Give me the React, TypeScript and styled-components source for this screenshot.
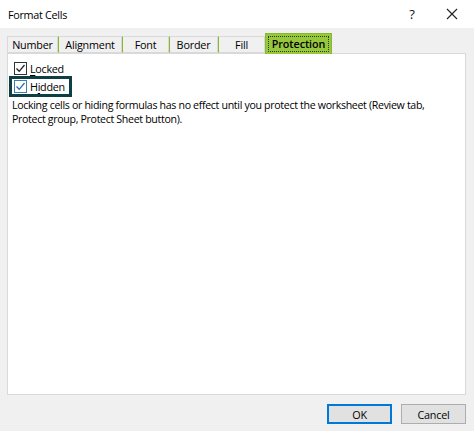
import styled, { createGlobalStyle } from 'styled-components';

const GlobalStyle = createGlobalStyle`
    html, body {
        margin: 0;
        padding: 0;
        background: #ffffff;
    }
    body {
        font-family: "Open Sans", "Noto Sans", "Liberation Sans", sans-serif;
        font-size: 10.5px;
        letter-spacing: -0.3px;
        color: #000000;
    }
`;

const Dialog = styled.div`
    width: 474px;
    height: 431px;
    display: flex;
    flex-direction: column;
    background: #f0f0f0;
    overflow: hidden;
`;

const TitleBar = styled.div`
    height: 28px;
    flex: 0 0 28px;
    background: #ffffff;
    display: flex;
    align-items: center;
    padding-left: 8px;
`;

const Title = styled.div`
    flex: 1;
    font-size: 10.8px;
`;

const TitleButton = styled.div<{ $width: number }>`
    width: ${p => p.$width}px;
    height: 28px;
    display: flex;
    align-items: center;
    justify-content: center;
    font-size: 13px;
    color: #111;
`;

const Body = styled.div`
    flex: 1;
    display: flex;
    flex-direction: column;
    padding: 0 8px 0 7px;
`;

const TabStrip = styled.div`
    height: 25px;
    flex: 0 0 25px;
    display: flex;
    align-items: flex-end;
    position: relative;
    z-index: 1;
`;

const Tab = styled.div<{ $width: number; $active?: boolean }>`
    width: ${p => p.$width}px;
    box-sizing: border-box;
    height: ${p => (p.$active ? 21 : 17)}px;
    margin-bottom: ${p => (p.$active ? -1 : 0)}px;
    display: flex;
    align-items: center;
    justify-content: center;
    font-size: 10.8px;
    letter-spacing: -0.2px;
    background: ${p => (p.$active ? '#97c83c' : '#f0f0f0')};
    border: 1px solid ${p => (p.$active ? '#86b830' : '#d9d9d9')};
    border-bottom: ${p => (p.$active ? 'none' : '1px solid #d9d9d9')};
    & + & {
        border-left: ${p => (p.$active ? '1px solid #86b830' : 'none')};
    }
`;

const FocusLabel = styled.span`
    outline: 1px dotted #2b3a10;
    padding: 0 3px;
    line-height: 14px;
    font-weight: 600;
    letter-spacing: -0.1px;
`;

const Panel = styled.div`
    flex: 0 0 342px;
    background: #ffffff;
    border: 1px solid #d9d9d9;
    box-sizing: border-box;
    padding: 7px 5px 0 4px;
    display: flex;
    flex-direction: column;
    align-items: flex-start;
`;

const CheckRow = styled.label<{ $focused?: boolean }>`
    display: flex;
    align-items: center;
    gap: 3px;
    height: 15px;
    padding: ${p => (p.$focused ? '0 4px 0 2px' : '0 0 0 2px')};
    margin-left: ${p => (p.$focused ? '-3px' : '0')};
    border: ${p => (p.$focused ? '3px solid #0e3f44' : 'none')};
    font-size: 10.8px;
`;

const Box = styled.span<{ $focused?: boolean }>`
    width: 13px;
    height: 13px;
    box-sizing: border-box;
    border: 1px solid ${p => (p.$focused ? '#3c7fb1' : '#333333')};
    background: #ffffff;
    display: flex;
    align-items: center;
    justify-content: center;
`;

const Under = styled.span`
    text-decoration: underline;
    text-underline-offset: 2px;
`;

const Note = styled.p`
    margin: 1px 0 0 0;
    font-size: 10.6px;
    line-height: 14px;
    letter-spacing: -0.32px;
    white-space: nowrap;
`;

const ButtonRow = styled.div`
    flex: 1;
    display: flex;
    justify-content: flex-end;
    align-items: flex-start;
    gap: 9px;
    padding-top: 9px;
`;

const DialogButton = styled.button<{ $default?: boolean }>`
    width: 65px;
    height: 20px;
    box-sizing: border-box;
    background: #e1e1e1;
    border: 1px solid ${p => (p.$default ? '#0078d7' : '#adadad')};
    box-shadow: ${p => (p.$default ? 'inset 0 0 0 1px #0078d7' : 'none')};
    font-family: inherit;
    font-size: 10.8px;
    letter-spacing: -0.2px;
    color: #000;
    padding: 0;
`;

const Check = ({ color }: { color: string }) => (
    <svg width="11" height="11" viewBox="0 0 11 11">
        <polyline points="1.5,5.5 4.2,8.3 9.5,2" fill="none" stroke={color} strokeWidth="1.3" />
    </svg>
);

const tabs = [
    { label: 'Number', width: 51 },
    { label: 'Alignment', width: 64 },
    { label: 'Font', width: 47 },
    { label: 'Border', width: 49 },
    { label: 'Fill', width: 47 },
];

export default function App() {
    return (
        <>
            <GlobalStyle />
            <Dialog>
                <TitleBar>
                    <Title>Format Cells</Title>
                    <TitleButton $width={36}>?</TitleButton>
                    <TitleButton $width={44}>
                        <svg width="12" height="12" viewBox="0 0 12 12">
                            <path d="M1 1L11 11M11 1L1 11" stroke="#222" strokeWidth="1.1" />
                        </svg>
                    </TitleButton>
                </TitleBar>
                <Body>
                    <TabStrip>
                        {tabs.map(t => (
                            <Tab key={t.label} $width={t.width}>
                                {t.label}
                            </Tab>
                        ))}
                        <Tab $width={67} $active>
                            <FocusLabel>Protection</FocusLabel>
                        </Tab>
                    </TabStrip>
                    <Panel>
                        <CheckRow>
                            <Box>
                                <Check color="#222" />
                            </Box>
                            <span>
                                <Under>L</Under>ocked
                            </span>
                        </CheckRow>
                        <CheckRow $focused>
                            <Box $focused>
                                <Check color="#2a6fb0" />
                            </Box>
                            <span>
                                H<Under>i</Under>dden
                            </span>
                        </CheckRow>
                        <Note>
                            Locking cells or hiding formulas has no effect until you protect the worksheet (Review tab,
                            <br />
                            Protect group, Protect Sheet button).
                        </Note>
                    </Panel>
                    <ButtonRow>
                        <DialogButton $default>OK</DialogButton>
                        <DialogButton>Cancel</DialogButton>
                    </ButtonRow>
                </Body>
            </Dialog>
        </>
    );
}
